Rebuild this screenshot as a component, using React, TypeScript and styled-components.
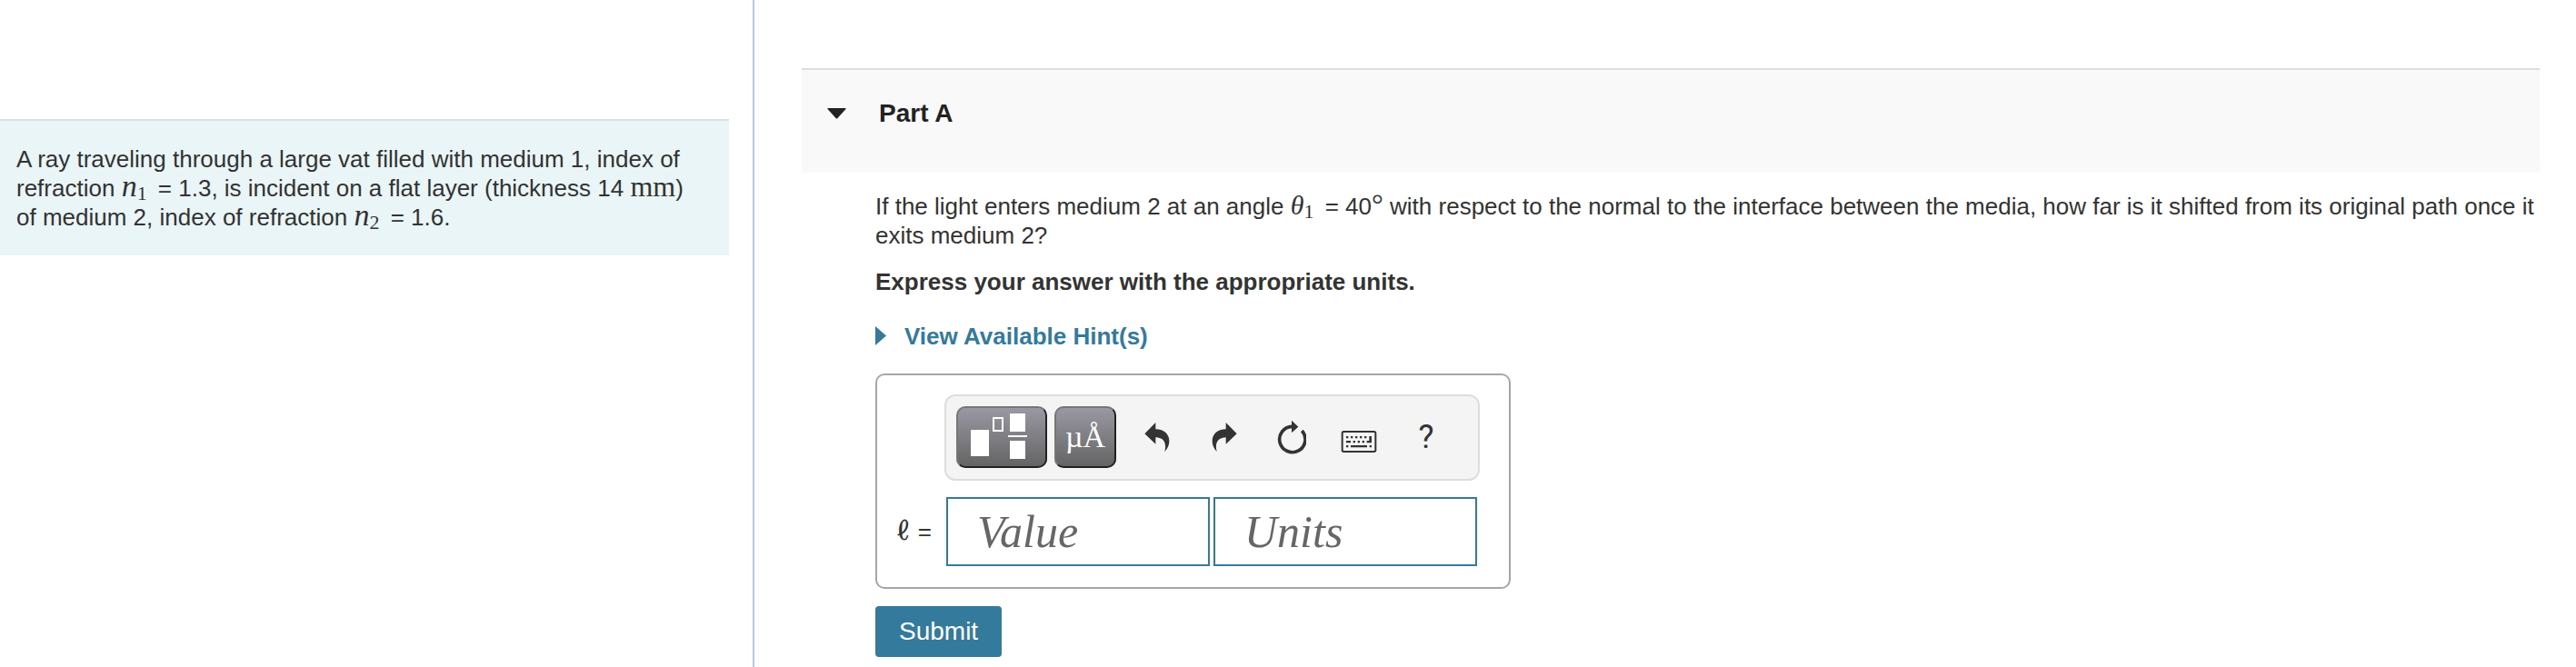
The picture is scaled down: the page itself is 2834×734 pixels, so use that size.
import React from "react";
import styled, { createGlobalStyle } from "styled-components";

const sans = `"Liberation Sans", Arial, Helvetica, sans-serif`;
const serif = `"Liberation Serif", "Times New Roman", serif`;

const GlobalStyle = createGlobalStyle`
  *, *::before, *::after { box-sizing: border-box; }
  body { margin: 0; background: #fff; color: #333; font: 26px/32px ${sans}; }
  p { margin: 0; }
  button, input { font: inherit; color: inherit; margin: 0; }
  button { cursor: pointer; }
`;

const Page = styled.div`
  display: grid;
  grid-template-columns: 415fr 1002fr;
  min-height: 100vh;
`;

const Sidebar = styled.aside`
  padding: 131px 26px 0 0;
  border-right: 2px solid #b8c9e1;
`;

const Problem = styled.p`
  padding: 26px 32px 26px 18px;
  border-top: 2px solid #dcdde0;
  background: #eaf5f7;
`;

const Main = styled.main`
  padding: 75px 40px 0 52px;
`;

const PartHeader = styled.header`
  padding: 32px 28px 49px;
  border-top: 2px solid #ddd;
  background: #f9f9f9;
`;

const PartToggle = styled.button`
  display: flex;
  align-items: center;
  gap: 36px;
  padding: 0;
  border: 0;
  background: none;
  color: #222;
`;

const PartTitle = styled.span`
  font-size: 28px;
  font-weight: bold;
`;

const PartBody = styled.section`
  padding: 21px 0 10px 81px;
`;

const Instruction = styled.p`
  margin: 19px 0 28px;
  font-weight: bold;
`;

const HintToggle = styled.button`
  display: flex;
  align-items: center;
  gap: 20px;
  padding: 0;
  border: 0;
  background: none;
  color: #347a9c;
  font-weight: bold;
`;

const Variable = styled.i<{ $greek?: boolean }>`
  font-family: ${serif};
  font-size: ${(p) => (p.$greek ? 30 : 34)}px;
  line-height: 0;
`;

const Unit = styled.span`
  font-family: ${serif};
  font-size: 32px;
  line-height: 0;
`;

const Subscript = styled.sub`
  margin-right: 5px;
  font-family: ${serif};
  font-size: 22px;
  line-height: 0;
  vertical-align: -4px;
`;

const Degree = styled.span`
  font-family: ${serif};
  font-size: 32px;
  line-height: 0;
`;

const AnswerBox = styled.form`
  display: flex;
  flex-direction: column;
  gap: 18px;
  width: fit-content;
  margin: 25px 0 19px;
  padding: 21px 32px 23px 20px;
  border: 2px solid #a6a6a6;
  border-radius: 10px;
`;

const Toolbar = styled.div`
  display: flex;
  align-items: center;
  margin-left: 54px;
  padding: 11px 11px 12px;
  border: 2px solid #ddd;
  border-radius: 12px;
  background: #f4f4f4;
`;

const PaletteButton = styled.button<{ $wide?: boolean }>`
  display: flex;
  align-items: center;
  justify-content: center;
  width: ${(p) => (p.$wide ? 100 : 68)}px;
  height: 68px;
  margin-right: 8px;
  padding: 0;
  border: 2px solid;
  border-color: #767676 #212121 #212121 #767676;
  border-radius: 10px;
  background: linear-gradient(#9a98a3, #646464);
  color: #fff;
  font-family: ${serif};
  font-size: 34px;
`;

const ToolButton = styled.button`
  display: flex;
  align-items: center;
  justify-content: center;
  width: 74px;
  height: 68px;
  padding: 0;
  border: 0;
  background: none;
  font-family: Roboto, ${sans};
  font-size: 36px;
`;

const AnswerRow = styled.div`
  display: flex;
  align-items: center;
  gap: 4px;
  padding-right: 3px;
`;

const AnswerLabel = styled.label`
  display: flex;
  align-items: baseline;
  gap: 8px;
  width: 52px;
`;

const Script = styled.span`
  font-family: "DejaVu Math TeX Gyre", "DejaVu Serif", serif;
  font-size: 30px;
`;

const AnswerInput = styled.input`
  width: 290px;
  height: 76px;
  padding: 0 32px;
  border: 2px solid #347a9c;
  border-radius: 0;
  background: #fff;
  font: italic 50px/56px ${serif};
  &::placeholder { color: #666; opacity: 1; }
`;

const SubmitButton = styled.button`
  height: 56px;
  padding: 0 26px;
  border: 0;
  border-radius: 4px;
  background: #347a9c;
  color: #fff;
  font-size: 28px;
`;

const TemplateIcon = () => (
  <svg width="68" height="52" viewBox="-4 0 68 52" fill="#fff" aria-hidden="true">
    <rect x="-4" y="18" width="20" height="29" />
    <rect x="21" y="5" width="10" height="14" fill="none" stroke="#fff" strokeWidth="2" />
    <rect x="39" y="0" width="17" height="20" />
    <rect x="37" y="24" width="21" height="2" />
    <rect x="39" y="30" width="17" height="20" />
  </svg>
);

const UndoIcon = () => (
  <svg width="28" height="34" viewBox="0 0 84 102" fill="#333" aria-hidden="true">
    <path d="M1 40 37 3V25C66 25 82 42 82 64C82 79 76 90 67 99C73 75 68 53 37 52V74Z" />
  </svg>
);

const RedoIcon = () => (
  <svg width="28" height="34" viewBox="0 0 84 102" fill="#333" aria-hidden="true">
    <path d="M83 40 47 3V25C18 25 2 42 2 64C2 79 8 90 17 99C11 75 16 53 47 52V74Z" />
  </svg>
);

const ResetIcon = () => (
  <svg width="32" height="38" viewBox="0 0 96 114" fill="#333" aria-hidden="true">
    <path d="M48 2 70 23 48 43Z" />
    <path
      d="M49 22A42.500 42.500 0 1 0 82 36"
      fill="none"
      stroke="#333"
      strokeWidth="11"
    />
  </svg>
);

const KeyboardIcon = () => (
  <svg width="40" height="34" viewBox="0 -30 120 102" fill="#333" aria-hidden="true">
    <rect x="5" y="3" width="110" height="66" rx="5" fill="none" stroke="#333" strokeWidth="6" />
    <path d="M18 18h7v7h-7zM33 18h7v7h-7zM48 18h7v7h-7zM63 18h7v7h-7zM78 18h7v7h-7z" />
    <path d="M18 33h15v7H18zM41 33h7v7h-7zM56 33h7v7h-7zM71 33h7v7h-7zM86 33h8V18h8v22H86z" />
    <path d="M18 48h7v7h-7zM33 48h54v7H33zM95 48h7v7h-7z" />
  </svg>
);

export default function App() {
  return (
    <>
      <GlobalStyle />
      <Page>
        <Sidebar>
          <Problem>
            A ray traveling through a large vat filled with medium 1, index of refraction{" "}
            <Variable>n</Variable>
            <Subscript>1</Subscript> = 1.3, is incident on a flat layer (thickness 14{" "}
            <Unit>mm</Unit>) of medium 2, index of refraction <Variable>n</Variable>
            <Subscript>2</Subscript> = 1.6.
          </Problem>
        </Sidebar>
        <Main>
          <PartHeader>
            <PartToggle type="button" aria-expanded="true">
              <svg width="21" height="12" viewBox="0 0 21 12" fill="#222" aria-hidden="true">
                <path d="M1 0H20Q21 0 20.500 1L11 11.500H10L.5 1Q0 0 1 0Z" />
              </svg>
              <PartTitle>Part A</PartTitle>
            </PartToggle>
          </PartHeader>
          <PartBody>
            <p>
              If the light enters medium 2 at an angle <Variable $greek>θ</Variable>
              <Subscript>1</Subscript> = 40<Degree>°</Degree> with respect to the normal to the
              interface between the media, how far is it shifted from its original path once it
              exits medium 2?
            </p>
            <Instruction>Express your answer with the appropriate units.</Instruction>
            <HintToggle type="button" aria-expanded="false">
              <svg width="12" height="22" viewBox="0 0 12 22" fill="#347a9c" aria-hidden="true">
                <path d="M0 0 12 10.500 0 21Z" />
              </svg>
              View Available Hint(s)
            </HintToggle>
            <AnswerBox id="answer" onSubmit={(e) => e.preventDefault()}>
              <Toolbar role="toolbar" aria-label="Equation tools">
                <PaletteButton type="button" $wide aria-label="Templates">
                  <TemplateIcon />
                </PaletteButton>
                <PaletteButton type="button">µÅ</PaletteButton>
                <ToolButton type="button" aria-label="Undo">
                  <UndoIcon />
                </ToolButton>
                <ToolButton type="button" aria-label="Redo">
                  <RedoIcon />
                </ToolButton>
                <ToolButton type="button" aria-label="Reset">
                  <ResetIcon />
                </ToolButton>
                <ToolButton type="button" aria-label="Keyboard shortcuts">
                  <KeyboardIcon />
                </ToolButton>
                <ToolButton type="button">?</ToolButton>
              </Toolbar>
              <AnswerRow>
                <AnswerLabel htmlFor="value">
                  <Script>ℓ</Script> =
                </AnswerLabel>
                <AnswerInput id="value" placeholder="Value" />
                <AnswerInput aria-label="Units" placeholder="Units" />
              </AnswerRow>
            </AnswerBox>
            <SubmitButton type="submit" form="answer">
              Submit
            </SubmitButton>
          </PartBody>
        </Main>
      </Page>
    </>
  );
}
